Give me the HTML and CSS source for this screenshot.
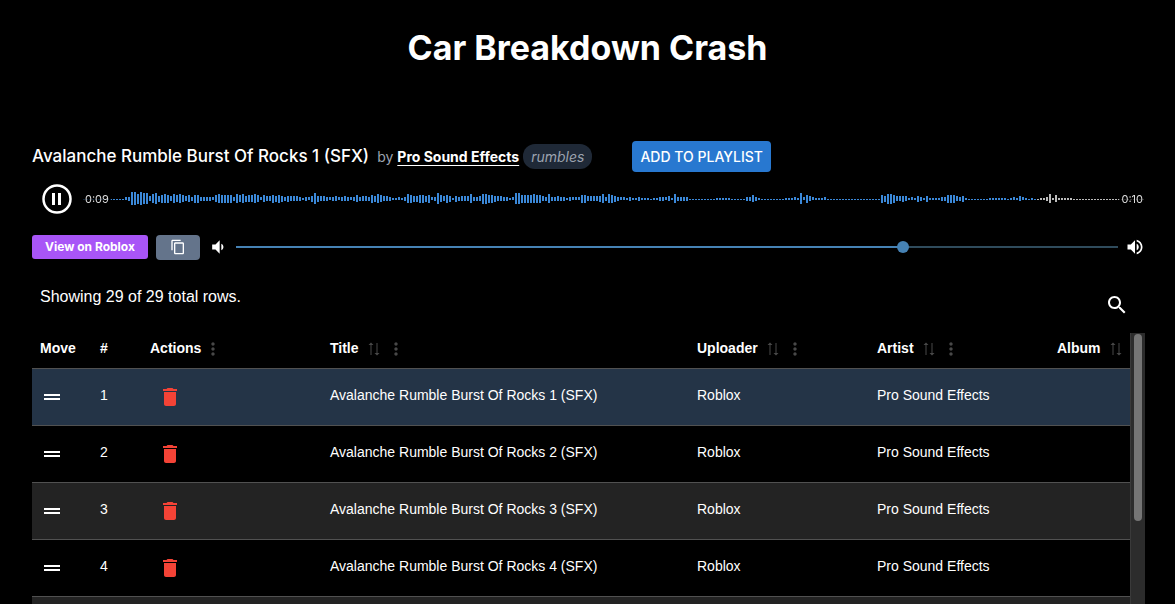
FILE: index.html
```html
<!DOCTYPE html>
<html lang="en">
<head>
<meta charset="UTF-8" />
<meta name="viewport" content="width=device-width, initial-scale=1" />
<title>Car Breakdown Crash</title>
<link rel="stylesheet" href="styles.css">
</head>
<body>

<!-- Shared icons -->
<svg class="sprite" aria-hidden="true">
  <symbol id="i-drag" viewBox="0 0 24 24"><path d="M20 9H4v2h16V9zM4 15h16v-2H4v2z"/></symbol>
  <symbol id="i-trash" viewBox="0 0 24 24"><path d="M6 19c0 1.1.9 2 2 2h8c1.1 0 2-.9 2-2V7H6v12zM19 4h-3.5l-1-1h-5l-1 1H5v2h14V4z"/></symbol>
  <symbol id="i-dots" viewBox="0 0 24 24"><path d="M12 8c1.1 0 2-.9 2-2s-.9-2-2-2-2 .9-2 2 .9 2 2 2zm0 2c-1.1 0-2 .9-2 2s.9 2 2 2 2-.9 2-2-.9-2-2-2zm0 6c-1.1 0-2 .9-2 2s.9 2 2 2 2-.9 2-2-.9-2-2-2z"/></symbol>
  <symbol id="i-sort" viewBox="0 0 12 14"><path d="M2.500 13V3H.5L3 .5 5.500 3H3.500v10zM8.500 1h1v10h2L9 13.500 6.500 11h2z"/></symbol>
</svg>

<h1>Car Breakdown Crash</h1>

<main>
  <!-- Player -->
  <section class="player" aria-label="Player">
    <div class="now-playing">
      <h2>Avalanche Rumble Burst Of Rocks 1 (SFX)</h2>
      <span class="by">by</span>
      <a class="artist" href="#">Pro Sound Effects</a>
      <span class="tag">rumbles</span>
      <button type="button" class="add-btn">ADD TO PLAYLIST</button>
    </div>

    <div class="wave-row">
      <button type="button" class="pause-btn" aria-label="Pause">
        <svg viewBox="0 0 30 30" width="30" height="30"><circle cx="15" cy="15" r="13.500" fill="none" stroke="#fff" stroke-width="2.500"/><path d="M10 9h3v12h-3zM16 9h3v12h-3z" fill="#fff"/></svg>
      </button>
      <div class="wave">
        <canvas id="waveform" height="20"></canvas>
        <span class="time time-now">0:09</span>
        <span class="time time-end">0:10</span>
      </div>
    </div>

    <div class="controls">
      <button type="button" class="view-btn">View on Roblox</button>
      <button type="button" class="copy-btn" aria-label="Copy">
        <svg viewBox="0 0 24 24" width="16" height="16"><path fill="#fff" d="M16 1H4c-1.100 0-2 .9-2 2v14h2V3h12V1zm3 4H8c-1.100 0-2 .9-2 2v14c0 1.100.9 2 2 2h11c1.100 0 2-.9 2-2V7c0-1.100-.9-2-2-2zm0 16H8V7h11v14z"/></svg>
      </button>
      <svg class="vol-icon" viewBox="0 0 24 24" width="20" height="20"><path fill="#fff" d="M18.500 12c0-1.770-1.020-3.290-2.500-4.030v8.050c1.480-.73 2.500-2.250 2.500-4.020zM5 9v6h4l5 5V4L9 9H5z"/></svg>
      <input type="range" class="volume" min="0" max="100" value="76" aria-label="Volume">
      <svg viewBox="0 0 24 24" width="20" height="20"><path fill="#fff" d="M3 9v6h4l5 5V4L7 9H3zm13.500 3c0-1.770-1.020-3.290-2.500-4.030v8.050c1.480-.73 2.500-2.250 2.500-4.020zM14 3.230v2.060c2.890.86 5 3.540 5 6.710s-2.110 5.850-5 6.710v2.060c4.010-.91 7-4.490 7-8.770s-2.990-7.860-7-8.770z"/></svg>
    </div>
  </section>

  <!-- Playlist -->
  <div class="toolbar">
    <p>Showing 29 of 29 total rows.</p>
    <button type="button" class="search-btn" aria-label="Search">
      <svg viewBox="0 0 24 24" width="24" height="24"><path fill="#fff" d="M15.500 14h-.79l-.28-.27C15.410 12.590 16 11.110 16 9.500 16 5.910 13.090 3 9.500 3S3 5.910 3 9.500 5.910 16 9.500 16c1.610 0 3.090-.59 4.230-1.570l.27.28v.79l5 4.990L20.490 19l-4.990-5zm-6 0C7.010 14 5 11.990 5 9.500S7.010 5 9.500 5 14 7.010 14 9.500 11.990 14 9.500 14z"/></svg>
    </button>
  </div>

  <div class="table-wrap">
    <div class="table-scroll">
      <table>
        <colgroup>
          <col class="c-move"><col class="c-num"><col class="c-mid"><col>
          <col class="c-mid"><col class="c-mid"><col class="c-album">
        </colgroup>
        <thead>
          <tr>
            <th>Move</th>
            <th>#</th>
            <th><div class="th">Actions <svg class="dots"><use href="#i-dots"/></svg></div></th>
            <th><div class="th">Title <svg class="sort"><use href="#i-sort"/></svg><svg class="dots"><use href="#i-dots"/></svg></div></th>
            <th><div class="th">Uploader <svg class="sort"><use href="#i-sort"/></svg><svg class="dots"><use href="#i-dots"/></svg></div></th>
            <th><div class="th">Artist <svg class="sort"><use href="#i-sort"/></svg><svg class="dots"><use href="#i-dots"/></svg></div></th>
            <th><div class="th">Album <svg class="sort"><use href="#i-sort"/></svg></div></th>
          </tr>
        </thead>
        <tbody id="rows"></tbody>
      </table>
    </div>
    <div class="scrollbar" aria-hidden="true"><div class="scroll-thumb"></div></div>
  </div>
</main>

<script src="script.js"></script>
</body>
</html>
```
FILE: styles.css
```css
*, *::before, *::after {
  box-sizing: border-box;
}
body {
  margin: 0;
  height: 100vh;
  overflow: hidden;
  display: flex;
  flex-direction: column;
  background: #000;
  color: #fff;
  font-family: "Liberation Sans", Arial, sans-serif;
}
h1, h2, p {
  margin: 0;
}
button {
  border: none;
  padding: 0;
  color: #fff;
  background: none;
  cursor: pointer;
}
svg {
  display: block;
  flex: none;
}
.sprite {
  position: absolute;
  width: 0;
  height: 0;
}

h1 {
  padding-top: 28px;
  font-family: Inter, sans-serif;
  font-size: 34px;
  font-weight: 700;
  line-height: 40px;
  text-align: center;
}

main {
  flex: 1;
  min-height: 0;
  display: flex;
  flex-direction: column;
  padding: 72px 30px 0 32px;
}

/* Player */
.now-playing {
  display: flex;
  align-items: center;
  height: 32px;
  font-family: Inter, sans-serif;
}
h2 {
  font-size: 17px;
  font-weight: 500;
}
.by {
  margin: 0 4px 0 8px;
  font-size: 14px;
  color: #9ca3af;
}
.artist {
  font-size: 14px;
  font-weight: 700;
  color: #fff;
  text-underline-offset: 3px;
}
.tag {
  margin-left: 4px;
  padding: 0 8px;
  border-radius: 12px;
  background: #1f2937;
  color: #9ca3af;
  font-size: 14px;
  font-style: italic;
  line-height: 25px;
}
.add-btn {
  margin-left: 40px;
  padding: 0 8px;
  border-radius: 4px;
  background: #2878d0;
  font-family: Inter, sans-serif;
  font-size: 14px;
  font-weight: 500;
  line-height: 31px;
}

.wave-row {
  display: flex;
  align-items: center;
  height: 54px;
}
.pause-btn {
  margin: 0 11px 0 10px;
}
.wave {
  position: relative;
  flex: 1;
  min-width: 0;
  height: 20px;
}
#waveform {
  display: block;
}
.time {
  position: absolute;
  top: 3px;
  padding: 0 2px;
  background: rgb(0 0 0 / 0.75);
  color: #ddd;
  font-family: Inter, sans-serif;
  font-size: 11px;
  line-height: 14px;
}
.time-now {
  left: 0;
}
.time-end {
  right: 0;
}

.controls {
  display: flex;
  align-items: center;
  height: 42px;
}
.view-btn {
  padding: 0 13px;
  border-radius: 3px;
  background: #a855f7;
  font-family: Inter, sans-serif;
  font-size: 12px;
  font-weight: 700;
  line-height: 24px;
}
.copy-btn {
  display: flex;
  align-items: center;
  justify-content: center;
  width: 44px;
  height: 25px;
  margin-left: 8px;
  border-radius: 4px;
  background: #64748b;
}
.vol-icon {
  margin-left: 8px;
}
.volume {
  flex: 1;
  min-width: 0;
  height: 12px;
  margin: 0 7px 0 8px;
  appearance: none;
  background: linear-gradient(to right, #4682b4 76%, #2f4b5c 76%) center / 100% 2px no-repeat;
}
.volume::-webkit-slider-thumb {
  appearance: none;
  width: 12px;
  height: 12px;
  border-radius: 50%;
  background: #4682b4;
}

/* Table */
.toolbar {
  display: flex;
  justify-content: space-between;
  height: 65px;
  padding: 19px 16px 0 8px;
  font-size: 16px;
  line-height: 20px;
}
.search-btn {
  height: 36px;
}
.table-wrap {
  flex: 1;
  min-height: 0;
  display: flex;
}
.table-scroll {
  flex: 1;
  min-width: 0;
  overflow: hidden;
}
table {
  width: 100%;
  table-layout: fixed;
  border-collapse: separate;
  border-spacing: 0;
  font-size: 14px;
}
.c-move {
  width: 60px;
}
.c-num {
  width: 50px;
}
.c-mid {
  width: 180px;
}
.c-album {
  width: 81px;
}
th, td {
  padding: 0 0 4px 8px;
  border-bottom: 1px solid #515151;
  text-align: left;
  white-space: nowrap;
}
th {
  height: 36px;
  padding-bottom: 6px;
}
td {
  height: 57px;
}
tbody tr:nth-child(odd) {
  background: #232323;
}
tbody tr.playing {
  background: #243447;
}
.th {
  display: flex;
  align-items: center;
  height: 20px;
}
.sort, .dots {
  margin-top: 3px;
  fill: #484848;
}
.sort {
  width: 12px;
  height: 14px;
  margin-left: 9px;
}
.dots {
  width: 20px;
  height: 20px;
  margin-left: 2px;
}
.sort + .dots {
  margin-left: 6px;
}
.drag svg, .delete svg {
  width: 24px;
  height: 24px;
  margin-top: 6px;
}
.drag svg {
  fill: #fff;
}
.delete {
  margin-left: 8px;
}
.delete svg {
  fill: #f44336;
}

.scrollbar {
  width: 15px;
  padding: 1px 3px 0 3px;
  border-left: 1px solid #3a3a3a;
  background: #2c2c2c;
}
.scroll-thumb {
  width: 8px;
  height: 187px;
  border-radius: 4px;
  background: #757575;
}
```
FILE: script.js
```js
// Playlist rows, only the first page is rendered
const PAGE_ROWS = 5;
const rows = document.getElementById('rows');
for (let i = 1; i <= PAGE_ROWS; i++) {
  const tr = document.createElement('tr');
  if (i === 1) tr.className = 'playing';
  tr.innerHTML = `
    <td><button type="button" class="drag" aria-label="Move row"><svg><use href="#i-drag"/></svg></button></td>
    <td>${i}</td>
    <td><button type="button" class="delete" aria-label="Delete"><svg><use href="#i-trash"/></svg></button></td>
    <td>Avalanche Rumble Burst Of Rocks ${i} (SFX)</td>
    <td>Roblox</td>
    <td>Pro Sound Effects</td>
    <td></td>`;
  rows.appendChild(tr);
}

// Bar heights, one hex digit per bar
const peaks = [
  '11111111111111',
  '34ddadbb59b689859797574884444',
  '379888849796779737558686465554243',
  '6b655434534543474554869755422324',
  '9866886834b7586',
  '2645559445aa886554423bb888898854',
  '94454424333885555694986433242242221',
  '2244352944441',
  '111111112222211111',
  '4474211111111',
  '22232b385322231',
  '11111111111111111',
  '86aa85565232642622224488854621',
  '1111112222221232532121',
  '12249272222211'
].join('');

const canvas = document.getElementById('waveform');

function drawWave() {
  const width = canvas.parentElement.clientWidth;
  canvas.width = width;
  const ctx = canvas.getContext('2d');
  const played = width * 0.898;
  for (let i = 0; i * 3 < width; i++) {
    const h = parseInt(peaks[i] || '1', 16);
    const x = i * 3;
    const y = h === 1 ? 10 : 10 - Math.ceil(h / 2);
    ctx.fillStyle = x < played ? '#3b88d8' : '#bbb';
    ctx.fillRect(x, y, 2, h);
  }
}

drawWave();
window.addEventListener('resize', drawWave);
```
